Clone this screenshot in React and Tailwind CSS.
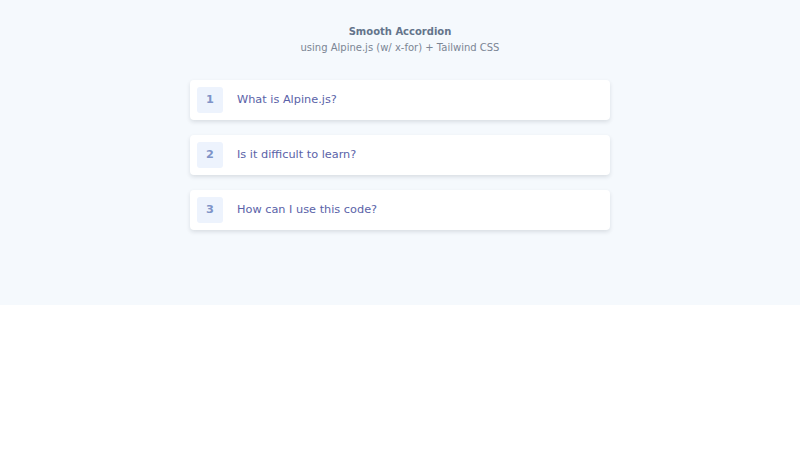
import React, { useState } from "react";

const items = [
  { id: 1, question: "What is Alpine.js?" },
  { id: 2, question: "Is it difficult to learn?" },
  { id: 3, question: "How can I use this code?" },
];

export default function App() {
  const [open, setOpen] = useState(null);

  return (
    <div
      className="w-full bg-white"
      style={{ fontFamily: '"DejaVu Sans", sans-serif' }}
    >
      <div className="h-[305px] bg-[#f5f9fd] pt-[25px]">
        <div className="text-center">
          <h1 className="text-[10px] font-bold leading-[14px] text-[#64748b]">
            Smooth Accordion
          </h1>
          <p className="mt-[2px] text-[10px] leading-[14px] text-[#7b8594]">
            using Alpine.js (w/ x-for) + Tailwind CSS
          </p>
        </div>
        <div className="mx-auto mt-[25px] flex w-[420px] flex-col gap-[15px]">
          {items.map((item) => (
            <button
              key={item.id}
              onClick={() => setOpen(open === item.id ? null : item.id)}
              className="flex h-[40px] w-full items-center rounded-[4px] bg-white px-[7px] text-left shadow-[0_2px_4px_rgba(15,23,42,0.12)]"
            >
              <span className="flex h-[26px] w-[26px] items-center justify-center rounded-[3px] bg-[#edf3fd] text-[11.3px] font-bold text-[#7f93c8]">
                {item.id}
              </span>
              <span className="ml-[14px] text-[11.3px] text-[#5a62a8]">
                {item.question}
              </span>
            </button>
          ))}
        </div>
      </div>
    </div>
  );
}
